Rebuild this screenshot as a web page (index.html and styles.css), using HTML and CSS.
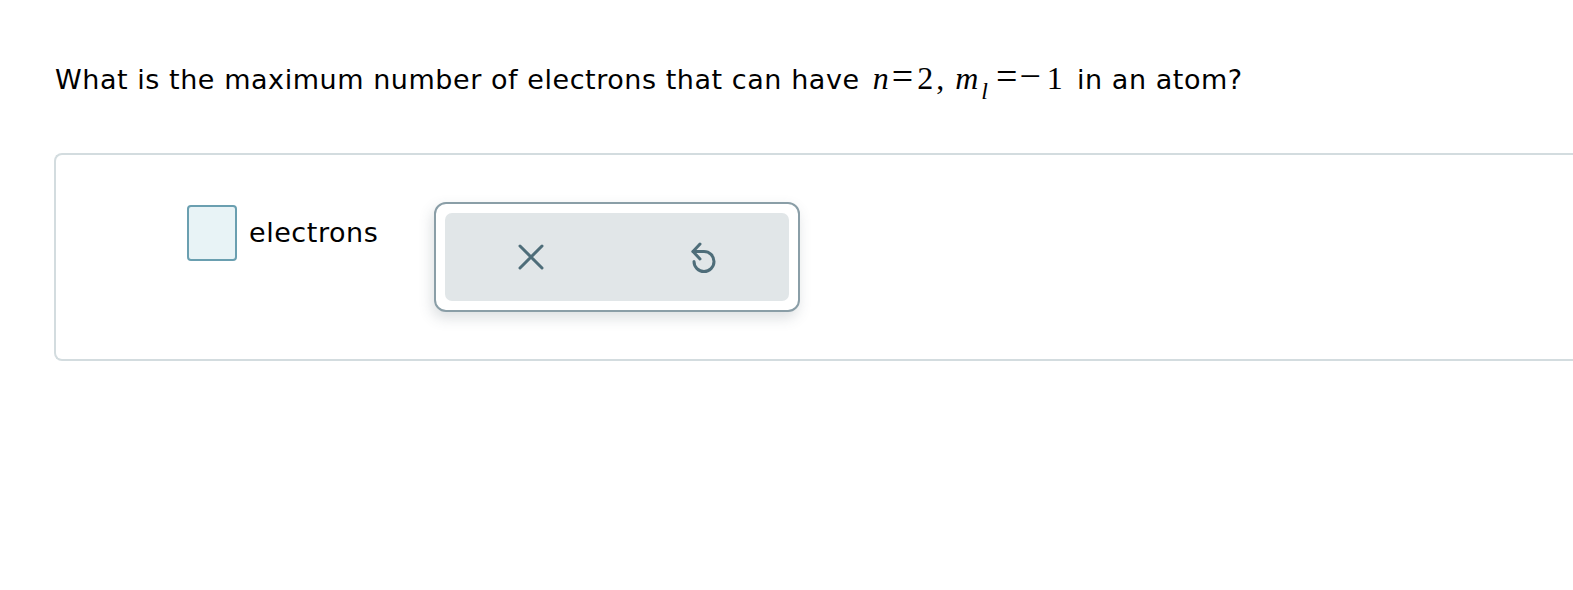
FILE: index.html
```html
<!DOCTYPE html>
<html>
<head>
<meta charset="utf-8">
<link rel="stylesheet" href="styles.css">
</head>
<body>
<div class="page">
  <p class="question">What is the maximum number of electrons that can have <span class="math"><i class="mi-n">n</i><span class="op op-1">=</span><span class="num-2">2</span><span class="comma">,</span><i class="mi-m">m</i><sub><i>l</i></sub><span class="op op-2">=</span><span class="op minus">−</span><span class="num-1">1</span></span> in an atom?</p>
  <div class="card">
    <div class="row">
      <div class="answer">
        <div class="input"></div>
        <span class="unit">electrons</span>
      </div>
      <div class="tools">
        <div class="tools-inner">
          <button class="tool" aria-label="clear">
            <svg width="26" height="26" viewBox="0 0 26 26"><path d="M2 2 L24 24 M24 2 L2 24" stroke="#4e6d79" stroke-width="3" fill="none" stroke-linecap="round"/></svg>
          </button>
          <button class="tool" aria-label="undo">
            <svg width="28" height="36" viewBox="0 0 28 36"><path d="M5 22.5 A10 10 0 1 0 15 12.5 L4 12.5" stroke="#4e6d79" stroke-width="3" fill="none" stroke-linecap="round" stroke-linejoin="round"/><path d="M11 5 L4 12.5 L11 20" stroke="#4e6d79" stroke-width="3" fill="none" stroke-linecap="round" stroke-linejoin="round"/></svg>
          </button>
        </div>
      </div>
    </div>
  </div>
</div>
</body>
</html>
```
FILE: styles.css
```css
html, body {
  margin: 0;
  padding: 0;
  background: #ffffff;
}
.page {
  padding: 54px 0 0 54px;
  font-family: "DejaVu Sans", Verdana, sans-serif;
  color: #000;
}
.question {
  margin: 0;
  padding-left: 1px;
  font-size: 27px;
  letter-spacing: 0.55px;
  line-height: 48px;
  height: 48px;
  white-space: nowrap;
}
.math {
  font-family: "Liberation Serif", "Times New Roman", serif;
  font-size: 32px;
  letter-spacing: 0;
  margin-left: 4px;
  margin-right: 5px;
}
.math i {
  font-style: italic;
}
.math .op {
  font-size: 38px;
  line-height: 0;
}
.op-1 {
  margin-left: 3px;
  margin-right: 4px;
}
.comma {
  margin-left: 3px;
  margin-right: 11px;
}
.math sub {
  font-size: 24px;
  vertical-align: -10px;
  line-height: 0;
  margin-left: 3px;
}
.op-2 {
  margin-left: 8px;
  margin-right: 2px;
}
.minus {
  margin-right: 6px;
}
.card {
  margin-top: 51px;
  border: 2px solid #d3dcdf;
  border-right: none;
  border-radius: 8px 0 0 8px;
  height: 208px;
  box-sizing: border-box;
  padding: 47px 0 0 131px;
}
.row {
  display: flex;
  align-items: flex-start;
  gap: 56px;
}
.answer {
  display: flex;
  align-items: flex-start;
  gap: 12px;
  margin-top: 3px;
}
.input {
  width: 50px;
  height: 56px;
  box-sizing: border-box;
  border: 2px solid #6a9fb0;
  border-radius: 4px;
  background: #e8f3f6;
}
.unit {
  font-size: 27px;
  letter-spacing: 0.55px;
  line-height: 30px;
  margin-top: 13px;
}
.tools {
  width: 366px;
  height: 110px;
  box-sizing: border-box;
  border: 2px solid #8a9ea7;
  border-radius: 12px;
  padding: 9px;
  background: #fff;
  box-shadow: -2px 6px 14px rgba(60, 80, 90, 0.18);
}
.tools-inner {
  display: flex;
  height: 100%;
  background: #e1e6e8;
  border-radius: 7px;
}
.tool {
  flex: 1;
  border: none;
  background: transparent;
  display: flex;
  align-items: center;
  justify-content: center;
  padding: 0;
}
.tool svg {
  display: block;
}
```
